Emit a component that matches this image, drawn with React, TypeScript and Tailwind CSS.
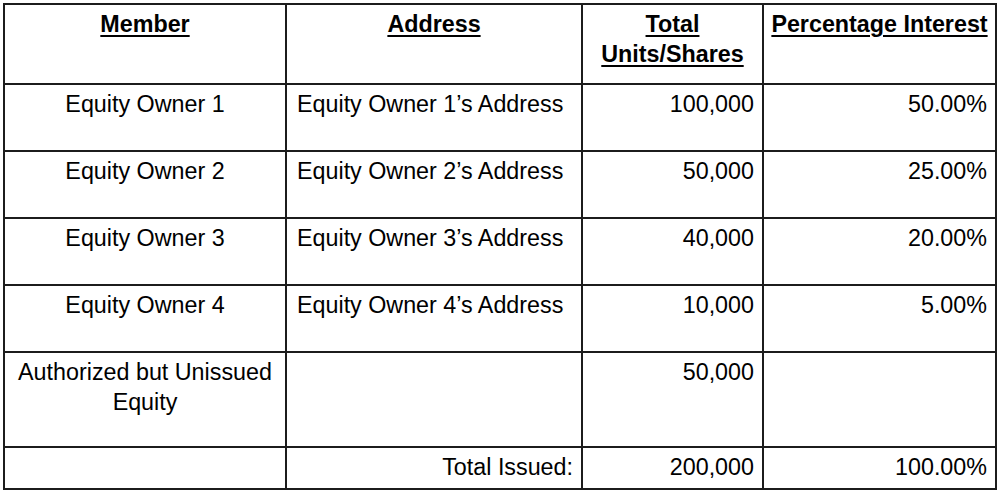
const rows = [
  { member: "Equity Owner 1", address: "Equity Owner 1’s Address", units: "100,000", pct: "50.00%" },
  { member: "Equity Owner 2", address: "Equity Owner 2’s Address", units: "50,000", pct: "25.00%" },
  { member: "Equity Owner 3", address: "Equity Owner 3’s Address", units: "40,000", pct: "20.00%" },
  { member: "Equity Owner 4", address: "Equity Owner 4’s Address", units: "10,000", pct: "5.00%" },
];

const cell = "border-r-2 border-b-2 border-[#1c1c1c] pt-[4px]";
const head = "underline decoration-[2px] underline-offset-[3px]";

export default function App() {
  return (
    <div
      className="min-h-screen bg-white pt-[3px] pl-[3px] text-black"
      style={{ fontFamily: '"Liberation Sans", Arial, sans-serif' }}
    >
      <div className="grid w-fit grid-cols-[282px_296px_181px_233px] grid-rows-[80px_67px_67px_67px_67px_95px_42px] border-l-2 border-t-2 border-[#1c1c1c] text-[23.3px] leading-[30px]">
        <div className={`${cell} flex justify-center text-center font-bold`}>
          <span className={head}>Member</span>
        </div>
        <div className={`${cell} flex justify-center text-center font-bold`}>
          <span className={head}>Address</span>
        </div>
        <div className={`${cell} flex justify-center text-center font-bold`}>
          <span className={head}>
            Total
            <br />
            Units/Shares
          </span>
        </div>
        <div className={`${cell} flex justify-center text-center font-bold`}>
          <span className={`${head} whitespace-nowrap`}>Percentage Interest</span>
        </div>

        {rows.map((r) => (
          <div key={r.member} className="contents">
            <div className={`${cell} px-[8px] text-center`}>{r.member}</div>
            <div className={`${cell} pl-[10px] pr-[8px]`}>{r.address}</div>
            <div className={`${cell} pr-[8px] text-right`}>{r.units}</div>
            <div className={`${cell} pr-[8px] text-right`}>{r.pct}</div>
          </div>
        ))}

        <div className={`${cell} px-[8px] text-center`}>
          Authorized but Unissued
          <br />
          Equity
        </div>
        <div className={cell}></div>
        <div className={`${cell} pr-[8px] text-right`}>50,000</div>
        <div className={cell}></div>

        <div className={cell}></div>
        <div className={`${cell} pr-[8px] text-right`}>Total Issued:</div>
        <div className={`${cell} pr-[8px] text-right`}>200,000</div>
        <div className={`${cell} pr-[8px] text-right`}>100.00%</div>
      </div>
    </div>
  );
}
